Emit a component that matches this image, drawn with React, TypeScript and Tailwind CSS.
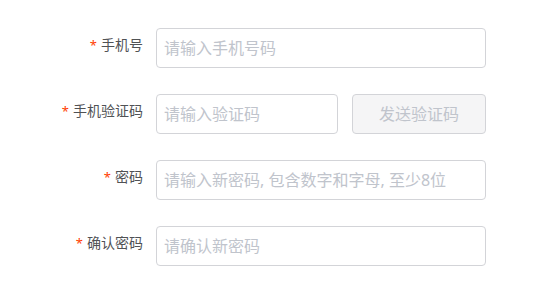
import { useState } from 'react';

const fields = [
  { key: 'phone', label: '手机号', placeholder: '请输入手机号码' },
  { key: 'code', label: '手机验证码', placeholder: '请输入验证码', withButton: true },
  { key: 'password', label: '密码', placeholder: '请输入新密码, 包含数字和字母, 至少8位' },
  { key: 'confirm', label: '确认密码', placeholder: '请确认新密码' },
];

export default function App() {
  const [values, setValues] = useState<Record<string, string>>({});

  return (
    <div
      className="w-[540px] h-[286px] bg-white pt-[28px]"
      style={{ fontFamily: '"Noto Sans", "Noto Sans CJK SC", sans-serif' }}
    >
      <form className="flex flex-col gap-[26px]">
        {fields.map((f) => (
          <div key={f.key} className="flex items-center">
            {/* label column */}
            <label className="w-[156px] pr-[13px] text-right text-[14px] leading-none text-[#505255] -mt-[6px]">
              <span className="text-[#ff3d00] text-[13px] mr-[4px]">*</span>
              {f.label}
            </label>
            {f.withButton ? (
              <div className="flex gap-[14px]">
                <input
                  value={values[f.key] || ''}
                  onChange={(e) => setValues({ ...values, [f.key]: e.target.value })}
                  placeholder={f.placeholder}
                  className="w-[182px] h-[40px] px-[7px] border border-[#d3d4d8] rounded-[4px] text-[16px] text-[#606266] placeholder:text-[#c0c4cc] outline-none"
                />
                <button
                  type="button"
                  disabled
                  className="w-[134px] h-[40px] border border-[#d3d4d8] rounded-[4px] bg-[#f5f5f6] text-[16px] text-[#c0c4cc]"
                >
                  发送验证码
                </button>
              </div>
            ) : (
              <input
                value={values[f.key] || ''}
                onChange={(e) => setValues({ ...values, [f.key]: e.target.value })}
                placeholder={f.placeholder}
                className="w-[330px] h-[40px] px-[7px] border border-[#d3d4d8] rounded-[4px] text-[16px] text-[#606266] placeholder:text-[#c0c4cc] outline-none"
              />
            )}
          </div>
        ))}
      </form>
    </div>
  );
}
